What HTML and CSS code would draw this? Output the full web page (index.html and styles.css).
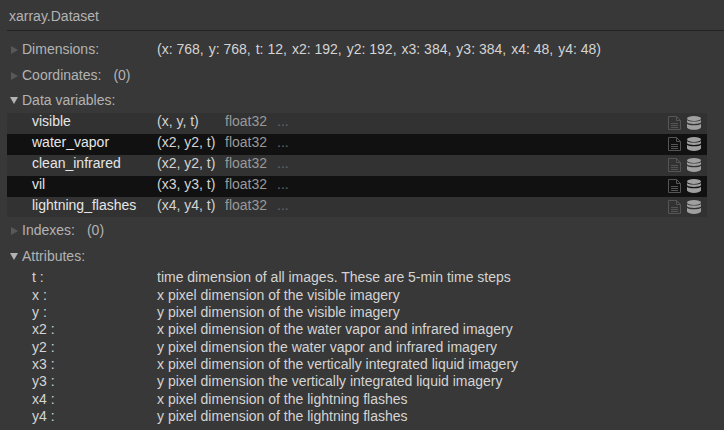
FILE: index.html
```
<!DOCTYPE html>
<html>
<head>
<meta charset="utf-8">
<title>xarray.Dataset</title>
<link rel="stylesheet" href="styles.css">
</head>
<body>
<svg class="defs" width="0" height="0">
  <symbol id="file" viewBox="0 0 13 14">
    <path d="M.5 .5H8.5L12.5 4.5V13.5H.5Z M8.5 .5V4.5H12.5" fill="none" stroke="currentColor"/>
    <path d="M3 7.5H10M3 9.5H10M3 11.5H10" fill="none" stroke="currentColor"/>
  </symbol>
  <symbol id="db" viewBox="0 0 14 14">
    <ellipse cx="7" cy="2.5" rx="7" ry="2.5" fill="currentColor"/>
    <path d="M0 3.9C1.5 6 12.5 6 14 3.9V6.3C12.5 8.6 1.5 8.6 0 6.3Z" fill="currentColor"/>
    <path d="M0 7.8C1.5 9.8 12.5 9.8 14 7.8V11.4C12.5 14.7 1.5 14.7 0 11.4Z" fill="currentColor"/>
  </symbol>
</svg>
<main class="ds">
  <header class="title">xarray.Dataset</header>
  <section class="sec head-first">
    <div class="sec-head closed"><i class="tri"></i><span class="label wide">Dimensions:</span><span class="dims"><span class="dim">(x: 768,</span> <span class="dim">y: 768,</span> <span class="dim">t: 12,</span> <span class="dim">x2: 192,</span> <span class="dim">y2: 192,</span> <span class="dim">x3: 384,</span> <span class="dim">y3: 384,</span> <span class="dim">x4: 48,</span> <span class="dim">y4: 48)</span></span></div>
  </section>
  <section class="sec coords">
    <div class="sec-head closed"><i class="tri"></i><span class="label">Coordinates:</span><span class="count">(0)</span></div>
  </section>
  <section class="sec datavars">
    <div class="sec-head open"><i class="tri"></i><span class="label">Data variables:</span></div>
    <ul class="vars">
      <li class="var"><span class="vname">visible</span><span class="vdims">(x, y, t)</span><span class="vtype">float32</span><span class="vprev">...</span><span class="icons"><svg class="ic-file"><use href="#file"/></svg><svg class="ic-db"><use href="#db"/></svg></span></li>
      <li class="var dark"><span class="vname">water_vapor</span><span class="vdims">(x2, y2, t)</span><span class="vtype">float32</span><span class="vprev">...</span><span class="icons"><svg class="ic-file"><use href="#file"/></svg><svg class="ic-db"><use href="#db"/></svg></span></li>
      <li class="var"><span class="vname">clean_infrared</span><span class="vdims">(x2, y2, t)</span><span class="vtype">float32</span><span class="vprev">...</span><span class="icons"><svg class="ic-file"><use href="#file"/></svg><svg class="ic-db"><use href="#db"/></svg></span></li>
      <li class="var dark"><span class="vname">vil</span><span class="vdims">(x3, y3, t)</span><span class="vtype">float32</span><span class="vprev">...</span><span class="icons"><svg class="ic-file"><use href="#file"/></svg><svg class="ic-db"><use href="#db"/></svg></span></li>
      <li class="var"><span class="vname">lightning_flashes</span><span class="vdims">(x4, y4, t)</span><span class="vtype">float32</span><span class="vprev">...</span><span class="icons"><svg class="ic-file"><use href="#file"/></svg><svg class="ic-db"><use href="#db"/></svg></span></li>
    </ul>
  </section>
  <section class="sec indexes">
    <div class="sec-head closed"><i class="tri"></i><span class="label">Indexes:</span><span class="count">(0)</span></div>
  </section>
  <section class="sec attrs">
    <div class="sec-head open"><i class="tri"></i><span class="label">Attributes:</span></div>
    <dl class="attr-list">
      <dt>t :</dt><dd>time dimension of all images. These are 5-min time steps</dd>
      <dt>x :</dt><dd>x pixel dimension of the visible imagery</dd>
      <dt>y :</dt><dd>y pixel dimension of the visible imagery</dd>
      <dt>x2 :</dt><dd>x pixel dimension of the water vapor and infrared imagery</dd>
      <dt>y2 :</dt><dd>y pixel dimension the water vapor and infrared imagery</dd>
      <dt>x3 :</dt><dd>x pixel dimension of the vertically integrated liquid imagery</dd>
      <dt>y3 :</dt><dd>y pixel dimension the vertically integrated liquid imagery</dd>
      <dt>x4 :</dt><dd>x pixel dimension of the lightning flashes</dd>
      <dt>y4 :</dt><dd>y pixel dimension of the lightning flashes</dd>
    </dl>
  </section>
</main>
</body>
</html>
```
FILE: styles.css
```
html, body {
  margin: 0;
  padding: 0;
  height: 430px;
  overflow: hidden;
  background: #383838;
}
.defs { position: absolute; }
.ds {
  font-family: "Liberation Sans", Arial, sans-serif;
  font-size: 14px;
  line-height: 17px;
  color: #d4d4d4;
  padding-top: 8px;
}
.title {
  margin-left: 7px;
  padding: 0 2px 5px 2px;
  height: 17px;
  color: #b3b3b3;
  border-bottom: 1px solid #222;
}
.head-first { margin-top: 10px; }
.coords { margin-top: 9px; }
.datavars { margin-top: 8px; }
.indexes { margin-top: 5px; }
.attrs { margin-top: 9px; }
.sec-head {
  display: flex;
  align-items: center;
  height: 17px;
  color: #b3b3b3;
}
.tri {
  width: 0;
  height: 0;
  margin-left: 11px;
  margin-right: 4px;
  border-style: solid;
  flex: none;
}
.closed .tri {
  border-width: 4.5px 0 4.5px 7px;
  border-color: transparent transparent transparent #585858;
}
.open .tri {
  border-width: 7px 4.5px 0 4.5px;
  border-color: #b3b3b3 transparent transparent transparent;
  margin-left: 10px;
  margin-right: 3px;
}
.open .label { margin-left: 1px; }
.label { flex: none; }
.label.wide { width: 135px; }
.count { margin-left: 12px; color: #b3b3b3; }
.dims { color: #d4d4d4; white-space: nowrap; }
.dim { margin-right: 1.12px; }
.vars {
  list-style: none;
  margin: 4px 0 0 7px;
  padding: 0;
  width: 700px;
}
.var {
  display: flex;
  align-items: flex-start;
  height: 21px;
  background: #323232;
}
.var:last-child { height: 20px; }
.var.dark { background: #111; }
.vname { width: 125px; margin-left: 25px; color: #e6e6e6; flex: none; }
.vdims { width: 68px; flex: none; color: #d4d4d4; }
.vtype { width: 52px; flex: none; color: #999; }
.vprev { color: #666; flex: 1; }
.icons {
  display: flex;
  align-items: center;
  gap: 6px;
  margin-right: 6px;
  padding-top: 3px;
}
.ic-file { width: 13px; height: 14px; color: #555; }
.ic-db { width: 14px; height: 14px; color: #a0a0a0; }
.attr-list {
  display: grid;
  grid-template-columns: 125px 1fr;
  margin: 4.2px 0 0 32px;
  grid-auto-rows: 17.375px;
}
.attr-list dt { color: #d4d4d4; }
.attr-list dd { margin: 0; color: #d4d4d4; white-space: nowrap; }
```
